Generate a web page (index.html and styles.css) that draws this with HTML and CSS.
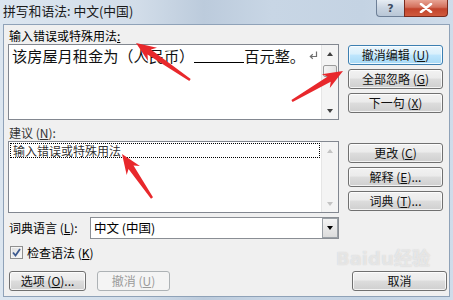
FILE: index.html
```html
<!DOCTYPE html>
<html lang="zh-CN">
<head>
<meta charset="utf-8">
<link rel="stylesheet" href="styles.css">
</head>
<body>
<div class="window">
  <div class="titlebar">
    <span class="title">拼写和语法: 中文(中国)</span>
    <div class="caps">
      <div class="cap help">?</div>
      <div class="cap close">
        <svg width="14" height="10" viewBox="0 0 14 10"><path d="M2 1 L12 9 M12 1 L2 9" stroke="#fff" stroke-width="2.6" stroke-linecap="round"/></svg>
      </div>
    </div>
  </div>
  <div class="panel">
    <div class="grid">
      <div class="lbl lbl1">输入错误或特殊用法<u>:</u></div>
      <div></div>
      <div class="textbox">
        <div class="tb-text"><span>该房屋月租金为（人民币）</span><span class="blank"></span><span>百元整。</span><svg class="ret" width="9" height="9" viewBox="0 0 9 9"><path d="M7.5 0.5 V5.5 H1.5 M3.8 3.2 L1.3 5.5 L3.8 7.8" fill="none" stroke="#6f6f6f" stroke-width="1.2"/></svg></div>
        <div class="vscroll active">
          <div class="arr up"></div>
          <div class="thumb"></div>
          <div class="track"></div>
          <div class="arr down"></div>
        </div>
      </div>
      <div class="btncol">
        <div class="btn default">撤消编辑 (<u>U</u>)</div>
        <div class="btn">全部忽略 (<u>G</u>)</div>
        <div class="btn">下一句 (<u>X</u>)</div>
      </div>
      <div class="lbl lbl2">建议 (<u>N</u>):</div>
      <div></div>
      <div class="listbox">
        <div class="items">
          <div class="item focus">输入错误或特殊用法</div>
        </div>
        <div class="vscroll">
          <div class="arr up"></div>
          <div class="track"></div>
          <div class="arr down"></div>
        </div>
      </div>
      <div class="btncol btncol2">
        <div class="btn">更改 (<u>C</u>)</div>
        <div class="btn">解释 (<u>E</u>)...</div>
        <div class="btn">词典 (<u>T</u>)...</div>
      </div>
    </div>
    <div class="langrow">
      <span class="lbl">词典语言 (<u>L</u>):</span>
      <div class="combo">
        <span class="combo-text">中文 (中国)</span>
        <div class="combo-btn"><span class="tri"></span></div>
      </div>
    </div>
    <div class="checkrow">
      <span class="checkbox">
        <svg width="9" height="9" viewBox="0 0 9 9"><path d="M1 4.5 L3.5 7.5 L8 1" fill="none" stroke="#3d5a8f" stroke-width="1.8"/></svg>
      </span>
      <span class="lbl">检查语法 (<u>K</u>)</span>
    </div>
    <div class="bottom">
      <div class="btn small">选项 (<u>O</u>)...</div>
      <div class="btn small disabled">撤消 (<u>U</u>)</div>
      <div class="spacer"></div>
      <div class="btn">取消</div>
    </div>
  </div>
</div>
<div class="watermark">Baidu经验</div>
<svg class="arrows" width="453" height="300" viewBox="0 0 453 300">
  <polygon fill="#e8282c" points="136,43 157,47.7 150.9,49.5 190.7,79 189.3,81 147.5,54.5 148,60.9"/>
  <polygon fill="#e8282c" points="343,71 329.8,88 330.7,81.7 292.6,102 291.4,100 327.7,76.5 321.7,74.2"/>
  <polygon fill="#e8282c" points="122,154 139.9,166 133.5,165.5 153,197.3 151,198.7 128.5,168.9 126.7,175"/>
</svg>
</body>
</html>
```

FILE: styles.css
```css
* { box-sizing: border-box; }
html, body {
  margin: 0;
  padding: 0;
  width: 453px;
  height: 300px;
  overflow: hidden;
}
body {
  font-family: "Noto Sans CJK SC", "Noto Sans", sans-serif;
  font-size: 12px;
  color: #000;
  position: relative;
  background: #c9d8e8;
}
u { text-decoration: underline; text-underline-offset: 1px; }

.window {
  width: 453px;
  height: 300px;
  background: linear-gradient(90deg, #dce6f0 0%, #d2dde9 30%, #bccbdc 45%, #c8d6e5 60%, #c4d3e3 80%, #cfdcea 100%);
  display: flex;
  flex-direction: column;
}

.titlebar {
  height: 24px;
  display: flex;
  align-items: flex-start;
  position: relative;
}
.title {
  font-family: "Noto Sans CJK SC", sans-serif;
  font-size: 12.8px;
  line-height: 14px;
  margin: 4px 0 0 3px;
  color: #1a1a1a;
}
.caps {
  margin-left: auto;
  margin-right: 5px;
  display: flex;
  height: 17px;
}
.cap {
  height: 17px;
  display: flex;
  align-items: center;
  justify-content: center;
  border: 1px solid #6d7f97;
  border-top: none;
}
.help {
  width: 28px;
  border-radius: 0 0 0 4px;
  background: linear-gradient(#e7edf4, #c9d4e1 50%, #b8c6d6);
  color: #3d4c63;
  font-family: "DejaVu Sans", sans-serif;
  font-size: 11px;
  font-weight: bold;
  border-right: none;
}
.close {
  width: 44px;
  border-radius: 0 0 4px 0;
  background: linear-gradient(#e8a494, #d3705c 45%, #c2432b 55%, #cf5a3e);
  border-color: #7a2b1e;
}

.panel {
  flex: 1;
  margin: 0 3px 3px 3px;
  background: #f0f0f0;
  border: 1px solid #8fa2b8;
  padding: 0 0 0 4px;
  display: flex;
  flex-direction: column;
}

.grid {
  display: grid;
  grid-template-columns: 331px 95px;
  grid-template-rows: 19px 76px 21px 72px;
  column-gap: 9px;
}
.lbl {
  font-size: 12px;
  line-height: 14px;
  white-space: nowrap;
}
.lbl1 { padding: 4px 0 0 1px; }
.lbl2 { align-self: end; padding: 0 0 1px 1px; color: #333; }

.textbox, .listbox {
  background: #fff;
  border: 1px solid #828790;
  display: flex;
  overflow: hidden;
}
.tb-text {
  flex: 1;
  min-width: 0;
  display: flex;
  align-items: flex-start;
  font-size: 15.2px;
  line-height: 18px;
  height: 19px;
  padding: 1px 0 0 3px;
  white-space: nowrap;
  color: #111;
}
.blank {
  flex: none;
  width: 50px;
  height: 17px;
  border-bottom: 1px solid #000;
}
.ret {
  flex: none;
  margin: 5px 0 0 4px;
}

.vscroll {
  width: 17px;
  flex: none;
  background: #f4f4f4;
  border-left: 1px solid #e6e6e6;
  display: flex;
  flex-direction: column;
}
.vscroll .arr {
  height: 17px;
  display: flex;
  align-items: center;
  justify-content: center;
}
.vscroll .arr::before {
  content: "";
  width: 0;
  height: 0;
  border-left: 3.5px solid transparent;
  border-right: 3.5px solid transparent;
}
.vscroll .up::before { border-bottom: 4px solid #c4c4c4; }
.vscroll .down::before { border-top: 4px solid #c4c4c4; }
.vscroll.active .up::before { border-bottom-color: #404040; }
.vscroll.active .down::before { border-top-color: #404040; }
.vscroll .track { flex: 1; }
.vscroll .thumb {
  height: 12px;
  margin: 3px 1px 0 1px;
  border: 1px solid #9b9b9b;
  border-radius: 2px;
  background: linear-gradient(90deg, #f5f5f5, #e2e2e2);
}

.btncol {
  display: flex;
  flex-direction: column;
  gap: 4px;
  padding-top: 1px;
}
.btncol2 { padding-top: 2px; }

.btn {
  height: 20px;
  width: 95px;
  border: 1px solid #707070;
  border-radius: 3px;
  background: linear-gradient(#f2f2f2 0%, #ebebeb 45%, #dddddd 50%, #cfcfcf 100%);
  box-shadow: inset 0 0 0 1px rgba(255,255,255,0.75);
  display: flex;
  align-items: center;
  justify-content: center;
  font-size: 12px;
  line-height: 14px;
  white-space: nowrap;
  color: #111;
}
.btn.default {
  border-color: #3c7fb1;
  background: linear-gradient(#eaf6fd 0%, #d9f0fc 45%, #bee6fd 50%, #a7d9f5 100%);
  box-shadow: inset 0 0 0 1px rgba(255,255,255,0.8);
}
.btn.small { width: 77px; }
.btn.disabled {
  width: 73px;
  border-color: #adb2b5;
  background: #f4f4f4;
  color: #9a9a9a;
  box-shadow: none;
}

.items { flex: 1; padding: 1px 1px 0 1px; }
.item {
  height: 15px;
  line-height: 13px;
  font-size: 12px;
  padding-left: 2px;
  color: #333;
}
.item.focus { border: 1px dotted #000; }

.langrow {
  display: flex;
  align-items: center;
  margin-top: 4px;
  height: 22px;
}
.langrow .lbl { width: 82px; padding-left: 1px; }
.combo {
  width: 249px;
  height: 22px;
  background: #fff;
  border: 1px solid #8a8e94;
  display: flex;
  align-items: center;
}
.combo-text {
  flex: 1;
  padding-left: 3px;
  font-size: 12.5px;
  line-height: 14px;
}
.combo-btn {
  width: 16px;
  height: 20px;
  border: 1px solid #9aa0a6;
  background: linear-gradient(#f4f4f4, #dcdcdc);
  display: flex;
  align-items: center;
  justify-content: center;
}
.tri {
  width: 0;
  height: 0;
  border-left: 3.5px solid transparent;
  border-right: 3.5px solid transparent;
  border-top: 4px solid #000;
}

.checkrow {
  display: flex;
  align-items: center;
  margin-top: 6px;
  height: 15px;
  gap: 4px;
  padding-left: 2px;
}
.checkbox {
  width: 13px;
  height: 13px;
  border: 1px solid #8f8f8f;
  background: linear-gradient(135deg, #dcdcdc, #fbfbfb);
  box-shadow: inset 0 0 0 1px #f4f4f4;
  display: flex;
  align-items: center;
  justify-content: center;
}

.bottom {
  display: flex;
  gap: 11px;
  margin-top: 11px;
  padding-left: 1px;
  padding-right: 2px;
}
.bottom .spacer { flex: 1; }

.watermark {
  position: absolute;
  left: 336px;
  top: 250px;
  font-family: "DejaVu Sans", sans-serif;
  font-weight: bold;
  font-size: 18px;
  line-height: 18px;
  color: rgba(255,255,255,0.55);
  text-shadow: 0 0 1px rgba(120,120,120,0.35);
  pointer-events: none;
  white-space: nowrap;
}

.arrows {
  position: absolute;
  left: 0;
  top: 0;
  pointer-events: none;
}
```
